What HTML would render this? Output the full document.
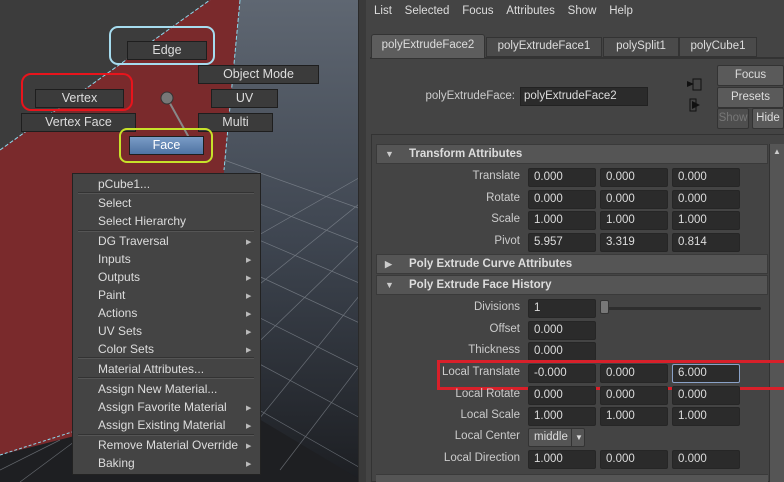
<!DOCTYPE html>
<html><head><style>
*{margin:0;padding:0;box-sizing:border-box}
body{width:784px;height:482px;overflow:hidden;background:#444;font-family:"Liberation Sans",sans-serif;font-size:12px;color:#ddd;position:relative}
.a{position:absolute}
.btn{position:absolute;background:#3b3b3b;border:1px solid #1e1e1e;color:#ddd;text-align:center;font-size:12.5px;line-height:17px;height:19px}
.mi{position:absolute;left:98px;font-size:12px;color:#ddd}
.ar{position:absolute;left:246px;font-size:7px;color:#bbb}
.sep{position:absolute;left:78px;width:176px;height:2px;background:#333;border-bottom:1px solid #555}
.lb{position:absolute;width:150px;left:370px;text-align:right;font-size:11.5px;color:#ccc}
.f{position:absolute;width:68px;height:19px;background:#2b2b2b;border:1px solid #262626;border-radius:2px;padding-left:5px;line-height:17px;font-size:11.5px;color:#ddd}
.hd{position:absolute;left:376px;width:392px;height:20px;background:#555;border:1px solid #3a3a3a;font-weight:bold;font-size:11.5px;color:#ddd;line-height:18px;padding-left:32px}
.tri{position:absolute;left:8px;top:0;font-size:9px;color:#ccc}
.rb{position:absolute;background:#5a5a5a;border:1px solid #333;border-radius:2px;text-align:center;color:#ddd;font-size:11.5px;line-height:19px;height:21px}
.tab{position:absolute;top:37px;height:20px;background:#4a4a4a;border:1px solid #333;text-align:center;line-height:17px;font-size:11.5px}
</style></head><body>
<svg class="a" style="left:0;top:0" width="364" height="482">
<defs><linearGradient id="g" x1="0" y1="0" x2="0" y2="1"><stop offset="0" stop-color="#5f6772"/><stop offset="0.5" stop-color="#3e4550"/><stop offset="1" stop-color="#1c1e22"/></linearGradient></defs>
<rect width="364" height="482" fill="url(#g)"/>
<polygon points="0,0 210,0 0,150" fill="#3c3c3c"/>
<polygon points="0,455 224,398 364,482 0,482" fill="#1e1f22"/>
<g stroke="#9aa0a8" stroke-width="0.7" opacity="0.55">
<line x1="224" y1="160" x2="364" y2="210"/><line x1="224" y1="190" x2="364" y2="245"/><line x1="224" y1="225" x2="364" y2="285"/><line x1="224" y1="260" x2="364" y2="325"/><line x1="224" y1="300" x2="364" y2="370"/><line x1="224" y1="345" x2="364" y2="420"/><line x1="224" y1="390" x2="364" y2="470"/>
<line x1="250" y1="240" x2="364" y2="175"/><line x1="240" y1="300" x2="364" y2="200"/><line x1="240" y1="360" x2="364" y2="240"/><line x1="250" y1="430" x2="364" y2="290"/><line x1="280" y1="470" x2="364" y2="360"/><line x1="20" y1="482" x2="90" y2="430"/><line x1="0" y1="470" x2="60" y2="440"/>
</g>
<polygon points="0,150 210,0 240,0 224,170 224,398 0,455" fill="#7a2a2c"/>
<line x1="0" y1="150" x2="210" y2="0" stroke="#8fd8ec" stroke-width="1" stroke-dasharray="4,2"/>
<line x1="240" y1="0" x2="224" y2="170" stroke="#8fd8ec" stroke-width="1" stroke-dasharray="4,2"/>
<line x1="0" y1="455" x2="72" y2="432" stroke="#8fd8ec" stroke-width="1" stroke-dasharray="3,2"/>
<line x1="167" y1="98" x2="197" y2="152" stroke="#888" stroke-width="2"/>
<circle cx="167" cy="98" r="6" fill="#777" stroke="#333"/>
</svg>
<div class="a" style="left:358px;top:0;width:8px;height:482px;background:#3a3a3a;border-left:1px solid #2a2a2a"></div>
<div class="btn" style="left:127px;top:41px;width:80px">Edge</div>
<div class="btn" style="left:198px;top:65px;width:121px">Object Mode</div>
<div class="btn" style="left:35px;top:89px;width:89px">Vertex</div>
<div class="btn" style="left:211px;top:89px;width:67px">UV</div>
<div class="btn" style="left:21px;top:113px;width:115px">Vertex Face</div>
<div class="btn" style="left:198px;top:113px;width:75px">Multi</div>
<div class="btn" style="left:129px;top:136px;width:75px;background:linear-gradient(#7a9cc6,#4f73a3);color:#fff">Face</div>
<div class="a" style="left:109px;top:26px;width:106px;height:39px;border:2px solid #a6dcef;border-radius:9px"></div>
<div class="a" style="left:21px;top:73px;width:112px;height:38px;border:2px solid #e8141c;border-radius:10px"></div>
<div class="a" style="left:119px;top:128px;width:94px;height:35px;border:2px solid #c7e22a;border-radius:8px"></div>
<div class="a" style="left:72px;top:173px;width:189px;height:302px;background:#444;border:1px solid #222"></div>
<div class="mi" style="top:177px">pCube1...</div><div class="sep" style="top:192px"></div>
<div class="mi" style="top:196px">Select</div>
<div class="mi" style="top:214px">Select Hierarchy</div><div class="sep" style="top:230px"></div>
<div class="mi" style="top:234px">DG Traversal</div><div class="ar" style="top:238px">▶</div>
<div class="mi" style="top:252px">Inputs</div><div class="ar" style="top:256px">▶</div>
<div class="mi" style="top:270px">Outputs</div><div class="ar" style="top:274px">▶</div>
<div class="mi" style="top:288px">Paint</div><div class="ar" style="top:292px">▶</div>
<div class="mi" style="top:306px">Actions</div><div class="ar" style="top:310px">▶</div>
<div class="mi" style="top:324px">UV Sets</div><div class="ar" style="top:328px">▶</div>
<div class="mi" style="top:342px">Color Sets</div><div class="ar" style="top:346px">▶</div><div class="sep" style="top:357px"></div>
<div class="mi" style="top:362px">Material Attributes...</div><div class="sep" style="top:377px"></div>
<div class="mi" style="top:382px">Assign New Material...</div>
<div class="mi" style="top:400px">Assign Favorite Material</div><div class="ar" style="top:404px">▶</div>
<div class="mi" style="top:418px">Assign Existing Material</div><div class="ar" style="top:422px">▶</div><div class="sep" style="top:434px"></div>
<div class="mi" style="top:438px">Remove Material Override</div><div class="ar" style="top:442px">▶</div>
<div class="mi" style="top:456px">Baking</div><div class="ar" style="top:460px">▶</div>
<div class="a" style="left:374px;top:5px;font-size:11.5px;color:#ddd">List&nbsp;&nbsp;&nbsp;&nbsp;Selected&nbsp;&nbsp;&nbsp;&nbsp;Focus&nbsp;&nbsp;&nbsp;&nbsp;Attributes&nbsp;&nbsp;&nbsp;&nbsp;Show&nbsp;&nbsp;&nbsp;&nbsp;Help</div>
<div class="a" style="left:370px;top:57px;width:414px;height:2px;background:#333"></div>
<div class="a" style="left:371px;top:34px;width:114px;height:24px;background:#5d5d5d;border:1px solid #333;border-bottom:none;border-radius:3px 3px 0 0;text-align:center;line-height:21px;font-size:11.5px">polyExtrudeFace2</div>
<div class="tab" style="left:486px;width:116px">polyExtrudeFace1</div>
<div class="tab" style="left:603px;width:76px">polySplit1</div>
<div class="tab" style="left:679px;width:78px">polyCube1</div>
<div class="a" style="left:380px;top:90px;width:135px;text-align:right;color:#ccc;font-size:11.5px">polyExtrudeFace:</div>
<div class="a" style="left:520px;top:87px;width:128px;height:19px;background:#2b2b2b;border:1px solid #222;padding-left:3px;line-height:17px;font-size:11.5px">polyExtrudeFace2</div>
<svg class="a" style="left:686px;top:76px" width="20" height="40"><rect x="7" y="3" width="8" height="11" fill="none" stroke="#111"/><polygon points="1,5 8,8 1,11" fill="#111"/><rect x="4" y="23" width="6" height="12" fill="none" stroke="#111"/><polygon points="6,25 14,29 6,33" fill="#111"/></svg>
<div class="rb" style="left:717px;top:65px;width:67px">Focus</div>
<div class="rb" style="left:717px;top:87px;width:67px">Presets</div>
<div class="rb" style="left:717px;top:108px;width:32px;color:#777;background:#4e4e4e">Show</div>
<div class="rb" style="left:752px;top:108px;width:32px">Hide</div>
<div class="a" style="left:371px;top:134px;width:413px;height:348px;border:1px solid #333;border-right:none"></div>
<div class="a" style="left:769px;top:144px;width:15px;height:338px;background:#555;border-left:1px solid #333"></div>
<div class="a" style="left:773px;top:147px;font-size:8px;color:#ccc">▲</div>
<div class="hd" style="top:144px"><span class="tri">▼</span>Transform Attributes</div>
<div class="lb" style="top:170px">Translate</div><div class="f" style="left:528px;top:168px">0.000</div><div class="f" style="left:600px;top:168px">0.000</div><div class="f" style="left:672px;top:168px">0.000</div>
<div class="lb" style="top:192px">Rotate</div><div class="f" style="left:528px;top:190px">0.000</div><div class="f" style="left:600px;top:190px">0.000</div><div class="f" style="left:672px;top:190px">0.000</div>
<div class="lb" style="top:213px">Scale</div><div class="f" style="left:528px;top:211px">1.000</div><div class="f" style="left:600px;top:211px">1.000</div><div class="f" style="left:672px;top:211px">1.000</div>
<div class="lb" style="top:235px">Pivot</div><div class="f" style="left:528px;top:233px">5.957</div><div class="f" style="left:600px;top:233px">3.319</div><div class="f" style="left:672px;top:233px">0.814</div>
<div class="hd" style="top:254px"><span class="tri">▶</span>Poly Extrude Curve Attributes</div>
<div class="hd" style="top:275px"><span class="tri">▼</span>Poly Extrude Face History</div>
<div class="lb" style="top:301px">Divisions</div><div class="f" style="left:528px;top:299px">1</div>
<div class="a" style="left:605px;top:307px;width:156px;height:3px;background:#2e2e2e;border-radius:2px"></div>
<div class="a" style="left:600px;top:300px;width:9px;height:14px;background:#777;border:1px solid #333;border-radius:2px"></div>
<div class="lb" style="top:323px">Offset</div><div class="f" style="left:528px;top:321px">0.000</div>
<div class="lb" style="top:344px">Thickness</div><div class="f" style="left:528px;top:342px">0.000</div>
<div class="lb" style="top:366px">Local Translate</div><div class="f" style="left:528px;top:364px">-0.000</div><div class="f" style="left:600px;top:364px">0.000</div><div class="f" style="left:672px;top:364px;border-color:#8aa2c8">6.000</div>
<div class="a" style="left:437px;top:360px;width:347px;height:30px;border:3px solid #d8202a;border-right:none"></div>
<div class="lb" style="top:388px">Local Rotate</div><div class="f" style="left:528px;top:386px">0.000</div><div class="f" style="left:600px;top:386px">0.000</div><div class="f" style="left:672px;top:386px">0.000</div>
<div class="lb" style="top:409px">Local Scale</div><div class="f" style="left:528px;top:407px">1.000</div><div class="f" style="left:600px;top:407px">1.000</div><div class="f" style="left:672px;top:407px">1.000</div>
<div class="lb" style="top:430px">Local Center</div><div class="f" style="left:528px;top:428px;width:57px;background:#555;border-color:#333">middle<span style="position:absolute;left:42px;top:0;border-left:1px solid #333;padding-left:3px;font-size:8px">▼</span></div>
<div class="lb" style="top:452px">Local Direction</div><div class="f" style="left:528px;top:450px">1.000</div><div class="f" style="left:600px;top:450px">0.000</div><div class="f" style="left:672px;top:450px">0.000</div>
<div class="a" style="left:376px;top:474px;width:392px;height:8px;background:#555;border-top:1px solid #3a3a3a"></div>
</body></html>
